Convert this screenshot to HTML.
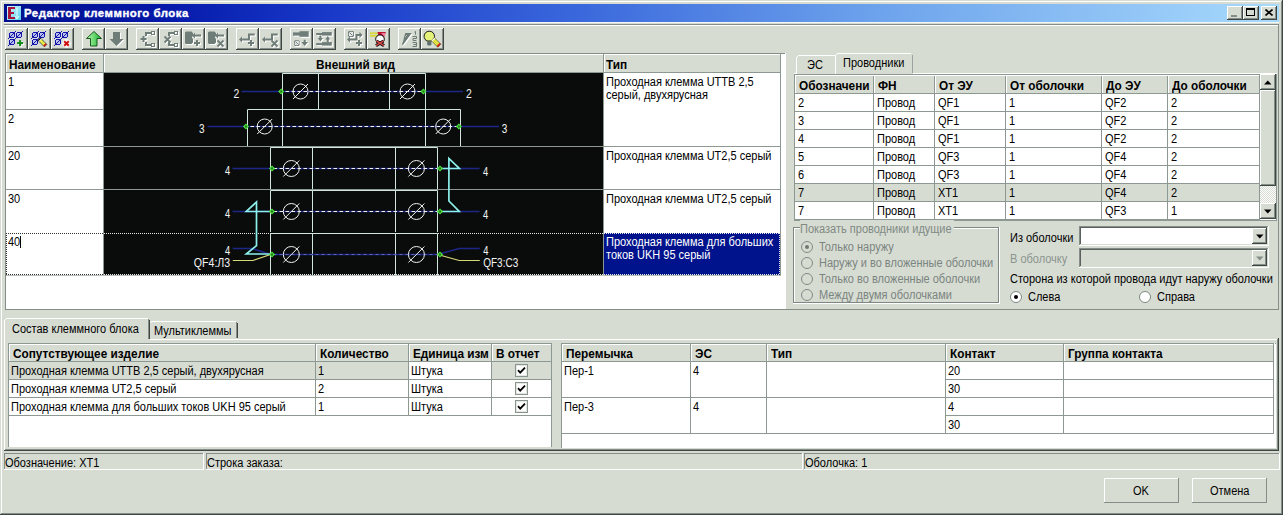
<!DOCTYPE html>
<html><head><meta charset="utf-8"><style>
html,body{margin:0;padding:0;}
body{width:1283px;height:515px;position:relative;overflow:hidden;background:#D7DCD3;font-family:"Liberation Sans",sans-serif;font-size:11px;color:#000;}
div,span,svg{position:absolute;}
span{white-space:pre;line-height:normal;}
</style></head><body>
<div style="left:0px;top:0px;width:1283px;height:1px;background:#D7DCD3"></div>
<div style="left:0px;top:0px;width:1px;height:515px;background:#D7DCD3"></div>
<div style="left:1px;top:1px;width:1281px;height:1px;background:#FFFFFF"></div>
<div style="left:1px;top:1px;width:1px;height:513px;background:#FFFFFF"></div>
<div style="left:0px;top:514px;width:1283px;height:1px;background:#3F4743"></div>
<div style="left:1282px;top:0px;width:1px;height:515px;background:#3F4743"></div>
<div style="left:1px;top:513px;width:1281px;height:1px;background:#858D88"></div>
<div style="left:1281px;top:1px;width:1px;height:513px;background:#858D88"></div>
<div style="left:4px;top:4px;width:1275px;height:18px;background:linear-gradient(to right,#00108C 0%,#0418A8 12%,#1838C8 25%,#3A68DC 45%,#6CA2EC 68%,#A8DAFC 100%)"></div>
<svg style="left:7px;top:6px" width="14" height="14" viewBox="0 0 14 14"><defs><linearGradient id="ig" x1="0" y1="0" x2="1" y2="1"><stop offset="0" stop-color="#D8F6FF"/><stop offset="1" stop-color="#58D0EC"/></linearGradient></defs><rect x="0" y="0" width="14" height="14" fill="url(#ig)"/><path d="M1 1H8V3H4V6H7V8H4V11H8V13H1Z" fill="#A8143A"/><path d="M10 2V12M8 10L10 13L12 10" stroke="#E0FFFF" stroke-width="1" fill="none"/></svg>
<span style="left:24px;top:6.6px;font-size:11.4px;font-weight:bold;color:#FFFFFF;letter-spacing:0.5px;-webkit-text-stroke:0.35px #FFFFFF">Редактор клеммного блока</span>
<div style="left:1227px;top:6px;width:16px;height:14px;background:#D7DCD3"></div>
<div style="left:1227px;top:6px;width:15px;height:1px;background:#FFFFFF"></div>
<div style="left:1227px;top:6px;width:1px;height:13px;background:#FFFFFF"></div>
<div style="left:1227px;top:19px;width:16px;height:1px;background:#3F4743"></div>
<div style="left:1242px;top:6px;width:1px;height:14px;background:#3F4743"></div>
<div style="left:1228px;top:18px;width:14px;height:1px;background:#858D88"></div>
<div style="left:1241px;top:7px;width:1px;height:12px;background:#858D88"></div>
<div style="left:1231px;top:15px;width:6px;height:2px;background:#858D88"></div>
<div style="left:1243px;top:6px;width:16px;height:14px;background:#D7DCD3"></div>
<div style="left:1243px;top:6px;width:15px;height:1px;background:#FFFFFF"></div>
<div style="left:1243px;top:6px;width:1px;height:13px;background:#FFFFFF"></div>
<div style="left:1243px;top:19px;width:16px;height:1px;background:#3F4743"></div>
<div style="left:1258px;top:6px;width:1px;height:14px;background:#3F4743"></div>
<div style="left:1244px;top:18px;width:14px;height:1px;background:#858D88"></div>
<div style="left:1257px;top:7px;width:1px;height:12px;background:#858D88"></div>
<div style="left:1246px;top:8px;width:9px;height:8px;border:1px solid #000;border-top-width:2px;box-sizing:border-box"></div>
<div style="left:1261px;top:6px;width:16px;height:14px;background:#D7DCD3"></div>
<div style="left:1261px;top:6px;width:15px;height:1px;background:#FFFFFF"></div>
<div style="left:1261px;top:6px;width:1px;height:13px;background:#FFFFFF"></div>
<div style="left:1261px;top:19px;width:16px;height:1px;background:#3F4743"></div>
<div style="left:1276px;top:6px;width:1px;height:14px;background:#3F4743"></div>
<div style="left:1262px;top:18px;width:14px;height:1px;background:#858D88"></div>
<div style="left:1275px;top:7px;width:1px;height:12px;background:#858D88"></div>
<svg style="left:1265px;top:9px" width="8" height="7" viewBox="0 0 8 7"><path d="M0.5 0.5L7.5 6.5M7.5 0.5L0.5 6.5" stroke="#000" stroke-width="1.6"/></svg>
<div style="left:4px;top:22px;width:1275px;height:1px;background:#F2F6F4"></div>
<div style="left:4px;top:24px;width:1275px;height:1px;background:#858D88"></div>
<div style="left:4px;top:25px;width:1275px;height:1px;background:#FFFFFF"></div>
<div style="left:1278px;top:24px;width:1px;height:286px;background:#858D88"></div>
<div style="left:5px;top:28px;width:23px;height:22px;background:#D7DCD3"></div>
<div style="left:5px;top:28px;width:22px;height:1px;background:#FFFFFF"></div>
<div style="left:5px;top:28px;width:1px;height:21px;background:#FFFFFF"></div>
<div style="left:5px;top:49px;width:23px;height:1px;background:#3F4743"></div>
<div style="left:27px;top:28px;width:1px;height:22px;background:#3F4743"></div>
<div style="left:6px;top:48px;width:21px;height:1px;background:#858D88"></div>
<div style="left:26px;top:29px;width:1px;height:20px;background:#858D88"></div>
<svg style="left:5px;top:28px" width="23" height="22" viewBox="0 0 23 22"><rect x="5" y="5" width="4" height="4" fill="#7888F4" fill-opacity="0.45"/><circle cx="7" cy="7" r="4" fill="#D0D8FF" fill-opacity="0.35"/><path d="M8 4h1v1h-1ZM9 8h1v1h-1ZM9 5h1v1h-1ZM4 6h1v1h-1ZM4 9h1v1h-1ZM5 4h1v1h-1ZM6 9h1v1h-1ZM7 4h1v1h-1ZM8 9h1v1h-1ZM9 4h1v1h-1ZM9 7h1v1h-1ZM4 5h1v1h-1ZM4 8h1v1h-1ZM5 9h1v1h-1ZM10 3h1v1h-1ZM3 10h1v1h-1ZM7 6h1v1h-1ZM8 5h1v1h-1ZM7 9h1v1h-1ZM9 6h1v1h-1ZM4 7h1v1h-1ZM6 4h1v1h-1ZM5 8h1v1h-1ZM6 7h1v1h-1Z" fill="#1414A8" shape-rendering="crispEdges"/><rect x="12" y="5" width="4" height="4" fill="#7888F4" fill-opacity="0.45"/><circle cx="14" cy="7" r="4" fill="#D0D8FF" fill-opacity="0.35"/><path d="M15 4h1v1h-1ZM16 8h1v1h-1ZM16 5h1v1h-1ZM11 6h1v1h-1ZM11 9h1v1h-1ZM12 4h1v1h-1ZM13 9h1v1h-1ZM14 4h1v1h-1ZM15 9h1v1h-1ZM16 4h1v1h-1ZM16 7h1v1h-1ZM11 5h1v1h-1ZM11 8h1v1h-1ZM12 9h1v1h-1ZM17 3h1v1h-1ZM10 10h1v1h-1ZM14 6h1v1h-1ZM15 5h1v1h-1ZM14 9h1v1h-1ZM16 6h1v1h-1ZM11 7h1v1h-1ZM13 4h1v1h-1ZM12 8h1v1h-1ZM13 7h1v1h-1Z" fill="#1414A8" shape-rendering="crispEdges"/><rect x="5" y="12" width="4" height="4" fill="#7888F4" fill-opacity="0.45"/><circle cx="7" cy="14" r="4" fill="#D0D8FF" fill-opacity="0.35"/><path d="M8 11h1v1h-1ZM9 15h1v1h-1ZM9 12h1v1h-1ZM4 13h1v1h-1ZM4 16h1v1h-1ZM5 11h1v1h-1ZM6 16h1v1h-1ZM7 11h1v1h-1ZM8 16h1v1h-1ZM9 11h1v1h-1ZM9 14h1v1h-1ZM4 12h1v1h-1ZM4 15h1v1h-1ZM5 16h1v1h-1ZM10 10h1v1h-1ZM3 17h1v1h-1ZM7 13h1v1h-1ZM8 12h1v1h-1ZM7 16h1v1h-1ZM9 13h1v1h-1ZM4 14h1v1h-1ZM6 11h1v1h-1ZM5 15h1v1h-1ZM6 14h1v1h-1Z" fill="#1414A8" shape-rendering="crispEdges"/><g fill="#FFFFFF" transform="translate(0.6,0.6)"><rect x="12.5" y="14.5" width="6" height="2" stroke="none"/><rect x="14.5" y="12.5" width="2" height="6" stroke="none"/></g><g fill="#108A18"><rect x="12.1" y="14.1" width="6" height="2" stroke="none"/><rect x="14.1" y="12.1" width="2" height="6" stroke="none"/></g></svg>
<div style="left:28px;top:28px;width:23px;height:22px;background:#D7DCD3"></div>
<div style="left:28px;top:28px;width:22px;height:1px;background:#FFFFFF"></div>
<div style="left:28px;top:28px;width:1px;height:21px;background:#FFFFFF"></div>
<div style="left:28px;top:49px;width:23px;height:1px;background:#3F4743"></div>
<div style="left:50px;top:28px;width:1px;height:22px;background:#3F4743"></div>
<div style="left:29px;top:48px;width:21px;height:1px;background:#858D88"></div>
<div style="left:49px;top:29px;width:1px;height:20px;background:#858D88"></div>
<svg style="left:28px;top:28px" width="23" height="22" viewBox="0 0 23 22"><rect x="5" y="5" width="4" height="4" fill="#7888F4" fill-opacity="0.45"/><circle cx="7" cy="7" r="4" fill="#D0D8FF" fill-opacity="0.35"/><path d="M8 4h1v1h-1ZM9 8h1v1h-1ZM9 5h1v1h-1ZM4 6h1v1h-1ZM4 9h1v1h-1ZM5 4h1v1h-1ZM6 9h1v1h-1ZM7 4h1v1h-1ZM8 9h1v1h-1ZM9 4h1v1h-1ZM9 7h1v1h-1ZM4 5h1v1h-1ZM4 8h1v1h-1ZM5 9h1v1h-1ZM10 3h1v1h-1ZM3 10h1v1h-1ZM7 6h1v1h-1ZM8 5h1v1h-1ZM7 9h1v1h-1ZM9 6h1v1h-1ZM4 7h1v1h-1ZM6 4h1v1h-1ZM5 8h1v1h-1ZM6 7h1v1h-1Z" fill="#1414A8" shape-rendering="crispEdges"/><rect x="12" y="5" width="4" height="4" fill="#7888F4" fill-opacity="0.45"/><circle cx="14" cy="7" r="4" fill="#D0D8FF" fill-opacity="0.35"/><path d="M15 4h1v1h-1ZM16 8h1v1h-1ZM16 5h1v1h-1ZM11 6h1v1h-1ZM11 9h1v1h-1ZM12 4h1v1h-1ZM13 9h1v1h-1ZM14 4h1v1h-1ZM15 9h1v1h-1ZM16 4h1v1h-1ZM16 7h1v1h-1ZM11 5h1v1h-1ZM11 8h1v1h-1ZM12 9h1v1h-1ZM17 3h1v1h-1ZM10 10h1v1h-1ZM14 6h1v1h-1ZM15 5h1v1h-1ZM14 9h1v1h-1ZM16 6h1v1h-1ZM11 7h1v1h-1ZM13 4h1v1h-1ZM12 8h1v1h-1ZM13 7h1v1h-1Z" fill="#1414A8" shape-rendering="crispEdges"/><rect x="5" y="12" width="4" height="4" fill="#7888F4" fill-opacity="0.45"/><circle cx="7" cy="14" r="4" fill="#D0D8FF" fill-opacity="0.35"/><path d="M8 11h1v1h-1ZM9 15h1v1h-1ZM9 12h1v1h-1ZM4 13h1v1h-1ZM4 16h1v1h-1ZM5 11h1v1h-1ZM6 16h1v1h-1ZM7 11h1v1h-1ZM8 16h1v1h-1ZM9 11h1v1h-1ZM9 14h1v1h-1ZM4 12h1v1h-1ZM4 15h1v1h-1ZM5 16h1v1h-1ZM10 10h1v1h-1ZM3 17h1v1h-1ZM7 13h1v1h-1ZM8 12h1v1h-1ZM7 16h1v1h-1ZM9 13h1v1h-1ZM4 14h1v1h-1ZM6 11h1v1h-1ZM5 15h1v1h-1ZM6 14h1v1h-1Z" fill="#1414A8" shape-rendering="crispEdges"/><path d="M12.6 10.2L10.2 12.6L16.4 18.8L18.8 16.4Z" fill="#E8EC48" stroke="#202010" stroke-width="0.7"/><path d="M15.2 17.6L17.6 15.2L18.8 16.4L16.4 18.8Z" fill="#C81818"/><path d="M12.6 10.2L10.2 12.6L11.2 13.6L13.6 11.2Z" fill="#FFFFFF"/><path d="M12.6 10.2L10.2 12.6" stroke="#000" stroke-width="1.1"/></svg>
<div style="left:51px;top:28px;width:23px;height:22px;background:#D7DCD3"></div>
<div style="left:51px;top:28px;width:22px;height:1px;background:#FFFFFF"></div>
<div style="left:51px;top:28px;width:1px;height:21px;background:#FFFFFF"></div>
<div style="left:51px;top:49px;width:23px;height:1px;background:#3F4743"></div>
<div style="left:73px;top:28px;width:1px;height:22px;background:#3F4743"></div>
<div style="left:52px;top:48px;width:21px;height:1px;background:#858D88"></div>
<div style="left:72px;top:29px;width:1px;height:20px;background:#858D88"></div>
<svg style="left:51px;top:28px" width="23" height="22" viewBox="0 0 23 22"><rect x="5" y="5" width="4" height="4" fill="#7888F4" fill-opacity="0.45"/><circle cx="7" cy="7" r="4" fill="#D0D8FF" fill-opacity="0.35"/><path d="M8 4h1v1h-1ZM9 8h1v1h-1ZM9 5h1v1h-1ZM4 6h1v1h-1ZM4 9h1v1h-1ZM5 4h1v1h-1ZM6 9h1v1h-1ZM7 4h1v1h-1ZM8 9h1v1h-1ZM9 4h1v1h-1ZM9 7h1v1h-1ZM4 5h1v1h-1ZM4 8h1v1h-1ZM5 9h1v1h-1ZM10 3h1v1h-1ZM3 10h1v1h-1ZM7 6h1v1h-1ZM8 5h1v1h-1ZM7 9h1v1h-1ZM9 6h1v1h-1ZM4 7h1v1h-1ZM6 4h1v1h-1ZM5 8h1v1h-1ZM6 7h1v1h-1Z" fill="#1414A8" shape-rendering="crispEdges"/><rect x="12" y="5" width="4" height="4" fill="#7888F4" fill-opacity="0.45"/><circle cx="14" cy="7" r="4" fill="#D0D8FF" fill-opacity="0.35"/><path d="M15 4h1v1h-1ZM16 8h1v1h-1ZM16 5h1v1h-1ZM11 6h1v1h-1ZM11 9h1v1h-1ZM12 4h1v1h-1ZM13 9h1v1h-1ZM14 4h1v1h-1ZM15 9h1v1h-1ZM16 4h1v1h-1ZM16 7h1v1h-1ZM11 5h1v1h-1ZM11 8h1v1h-1ZM12 9h1v1h-1ZM17 3h1v1h-1ZM10 10h1v1h-1ZM14 6h1v1h-1ZM15 5h1v1h-1ZM14 9h1v1h-1ZM16 6h1v1h-1ZM11 7h1v1h-1ZM13 4h1v1h-1ZM12 8h1v1h-1ZM13 7h1v1h-1Z" fill="#1414A8" shape-rendering="crispEdges"/><rect x="5" y="12" width="4" height="4" fill="#7888F4" fill-opacity="0.45"/><circle cx="7" cy="14" r="4" fill="#D0D8FF" fill-opacity="0.35"/><path d="M8 11h1v1h-1ZM9 15h1v1h-1ZM9 12h1v1h-1ZM4 13h1v1h-1ZM4 16h1v1h-1ZM5 11h1v1h-1ZM6 16h1v1h-1ZM7 11h1v1h-1ZM8 16h1v1h-1ZM9 11h1v1h-1ZM9 14h1v1h-1ZM4 12h1v1h-1ZM4 15h1v1h-1ZM5 16h1v1h-1ZM10 10h1v1h-1ZM3 17h1v1h-1ZM7 13h1v1h-1ZM8 12h1v1h-1ZM7 16h1v1h-1ZM9 13h1v1h-1ZM4 14h1v1h-1ZM6 11h1v1h-1ZM5 15h1v1h-1ZM6 14h1v1h-1Z" fill="#1414A8" shape-rendering="crispEdges"/><circle cx="15.5" cy="15.5" r="4.4" fill="#FFFFFF" opacity="0.75"/><path d="M13.2 13.2L17.8 17.8M17.8 13.2L13.2 17.8" stroke="#D01010" stroke-width="2"/></svg>
<div style="left:82px;top:28px;width:23px;height:22px;background:#D7DCD3"></div>
<div style="left:82px;top:28px;width:22px;height:1px;background:#FFFFFF"></div>
<div style="left:82px;top:28px;width:1px;height:21px;background:#FFFFFF"></div>
<div style="left:82px;top:49px;width:23px;height:1px;background:#3F4743"></div>
<div style="left:104px;top:28px;width:1px;height:22px;background:#3F4743"></div>
<div style="left:83px;top:48px;width:21px;height:1px;background:#858D88"></div>
<div style="left:103px;top:29px;width:1px;height:20px;background:#858D88"></div>
<svg style="left:82px;top:28px" width="23" height="22" viewBox="0 0 23 22"><defs><linearGradient id="ga" x1="0" y1="0" x2="1" y2="0"><stop offset="0" stop-color="#B8FFB0"/><stop offset="1" stop-color="#18B030"/></linearGradient></defs><path d="M4.5 10.5L12 3.5L19.5 10.5H15V18H8.5V10.5Z" fill="url(#ga)" stroke="#0A4A10" stroke-width="0.9" stroke-linejoin="miter"/></svg>
<div style="left:105px;top:28px;width:23px;height:22px;background:#D7DCD3"></div>
<div style="left:105px;top:28px;width:22px;height:1px;background:#FFFFFF"></div>
<div style="left:105px;top:28px;width:1px;height:21px;background:#FFFFFF"></div>
<div style="left:105px;top:49px;width:23px;height:1px;background:#3F4743"></div>
<div style="left:127px;top:28px;width:1px;height:22px;background:#3F4743"></div>
<div style="left:106px;top:48px;width:21px;height:1px;background:#858D88"></div>
<div style="left:126px;top:29px;width:1px;height:20px;background:#858D88"></div>
<svg style="left:105px;top:28px" width="23" height="22" viewBox="0 0 23 22"><g transform="translate(1,1)" fill="#FFFFFF" stroke="#FFFFFF"><path d="M8 4H15V11H18.5L11.5 18L4.5 11H8Z" stroke="none"/></g><g fill="#6F7D79" stroke="#6F7D79"><path d="M8 4H15V11H18.5L11.5 18L4.5 11H8Z" stroke="none"/></g></svg>
<div style="left:136px;top:28px;width:23px;height:22px;background:#D7DCD3"></div>
<div style="left:136px;top:28px;width:22px;height:1px;background:#FFFFFF"></div>
<div style="left:136px;top:28px;width:1px;height:21px;background:#FFFFFF"></div>
<div style="left:136px;top:49px;width:23px;height:1px;background:#3F4743"></div>
<div style="left:158px;top:28px;width:1px;height:22px;background:#3F4743"></div>
<div style="left:137px;top:48px;width:21px;height:1px;background:#858D88"></div>
<div style="left:157px;top:29px;width:1px;height:20px;background:#858D88"></div>
<svg style="left:136px;top:28px" width="23" height="22" viewBox="0 0 23 22"><g transform="translate(1,1)" fill="#FFFFFF" stroke="#FFFFFF"><rect x="4.5" y="10" width="6" height="2" stroke="none"/><rect x="6.5" y="8" width="2" height="6" stroke="none"/><rect x="9" y="4" width="2" height="4" stroke="none"/><rect x="9" y="14" width="2" height="4" stroke="none"/><rect x="9" y="4" width="6" height="2" stroke="none"/><rect x="9" y="16" width="6" height="2" stroke="none"/><rect x="15.5" y="3.5" width="3" height="3" fill="none" stroke-width="1"/><rect x="15.5" y="15.5" width="3" height="3" fill="none" stroke-width="1"/></g><g fill="#6F7D79" stroke="#6F7D79"><rect x="4.5" y="10" width="6" height="2" stroke="none"/><rect x="6.5" y="8" width="2" height="6" stroke="none"/><rect x="9" y="4" width="2" height="4" stroke="none"/><rect x="9" y="14" width="2" height="4" stroke="none"/><rect x="9" y="4" width="6" height="2" stroke="none"/><rect x="9" y="16" width="6" height="2" stroke="none"/><rect x="15.5" y="3.5" width="3" height="3" fill="none" stroke-width="1"/><rect x="15.5" y="15.5" width="3" height="3" fill="none" stroke-width="1"/></g></svg>
<div style="left:159px;top:28px;width:23px;height:22px;background:#D7DCD3"></div>
<div style="left:159px;top:28px;width:22px;height:1px;background:#FFFFFF"></div>
<div style="left:159px;top:28px;width:1px;height:21px;background:#FFFFFF"></div>
<div style="left:159px;top:49px;width:23px;height:1px;background:#3F4743"></div>
<div style="left:181px;top:28px;width:1px;height:22px;background:#3F4743"></div>
<div style="left:160px;top:48px;width:21px;height:1px;background:#858D88"></div>
<div style="left:180px;top:29px;width:1px;height:20px;background:#858D88"></div>
<svg style="left:159px;top:28px" width="23" height="22" viewBox="0 0 23 22"><g transform="translate(1,1)" fill="#FFFFFF" stroke="#FFFFFF"><path d="M5.5 8.5L11.5 14.5M11.5 8.5L5.5 14.5" stroke-width="1.8" fill="none"/><rect x="9" y="4" width="2" height="4" stroke="none"/><rect x="9" y="14" width="2" height="4" stroke="none"/><rect x="9" y="4" width="6" height="2" stroke="none"/><rect x="9" y="16" width="6" height="2" stroke="none"/><rect x="15.5" y="3.5" width="3" height="3" fill="none" stroke-width="1"/><rect x="15.5" y="15.5" width="3" height="3" fill="none" stroke-width="1"/></g><g fill="#6F7D79" stroke="#6F7D79"><path d="M5.5 8.5L11.5 14.5M11.5 8.5L5.5 14.5" stroke-width="1.8" fill="none"/><rect x="9" y="4" width="2" height="4" stroke="none"/><rect x="9" y="14" width="2" height="4" stroke="none"/><rect x="9" y="4" width="6" height="2" stroke="none"/><rect x="9" y="16" width="6" height="2" stroke="none"/><rect x="15.5" y="3.5" width="3" height="3" fill="none" stroke-width="1"/><rect x="15.5" y="15.5" width="3" height="3" fill="none" stroke-width="1"/></g></svg>
<div style="left:182px;top:28px;width:23px;height:22px;background:#D7DCD3"></div>
<div style="left:182px;top:28px;width:22px;height:1px;background:#FFFFFF"></div>
<div style="left:182px;top:28px;width:1px;height:21px;background:#FFFFFF"></div>
<div style="left:182px;top:49px;width:23px;height:1px;background:#3F4743"></div>
<div style="left:204px;top:28px;width:1px;height:22px;background:#3F4743"></div>
<div style="left:183px;top:48px;width:21px;height:1px;background:#858D88"></div>
<div style="left:203px;top:29px;width:1px;height:20px;background:#858D88"></div>
<svg style="left:182px;top:28px" width="23" height="22" viewBox="0 0 23 22"><g transform="translate(1,1)" fill="#FFFFFF" stroke="#FFFFFF"><path d="M4 3.5H9.5L11 5V7.5L10 9.5L11 11V14.5L9.5 16H4L3 15V4.5Z" stroke="none"/><path d="M10 7.4L13 4.5V6.5H19V8.5H13V10.5Z" stroke="none"/><rect x="12" y="14" width="6" height="2" stroke="none"/><rect x="14" y="12" width="2" height="6" stroke="none"/></g><g fill="#6F7D79" stroke="#6F7D79"><path d="M4 3.5H9.5L11 5V7.5L10 9.5L11 11V14.5L9.5 16H4L3 15V4.5Z" stroke="none"/><path d="M10 7.4L13 4.5V6.5H19V8.5H13V10.5Z" stroke="none"/><rect x="12" y="14" width="6" height="2" stroke="none"/><rect x="14" y="12" width="2" height="6" stroke="none"/></g></svg>
<div style="left:205px;top:28px;width:23px;height:22px;background:#D7DCD3"></div>
<div style="left:205px;top:28px;width:22px;height:1px;background:#FFFFFF"></div>
<div style="left:205px;top:28px;width:1px;height:21px;background:#FFFFFF"></div>
<div style="left:205px;top:49px;width:23px;height:1px;background:#3F4743"></div>
<div style="left:227px;top:28px;width:1px;height:22px;background:#3F4743"></div>
<div style="left:206px;top:48px;width:21px;height:1px;background:#858D88"></div>
<div style="left:226px;top:29px;width:1px;height:20px;background:#858D88"></div>
<svg style="left:205px;top:28px" width="23" height="22" viewBox="0 0 23 22"><g transform="translate(1,1)" fill="#FFFFFF" stroke="#FFFFFF"><path d="M4 3.5H9.5L11 5V7.5L10 9.5L11 11V14.5L9.5 16H4L3 15V4.5Z" stroke="none"/><path d="M10 7.4L13 4.5V6.5H19V8.5H13V10.5Z" stroke="none"/><path d="M12.5 12.5L18.5 18.5M18.5 12.5L12.5 18.5" stroke-width="1.8" fill="none"/></g><g fill="#6F7D79" stroke="#6F7D79"><path d="M4 3.5H9.5L11 5V7.5L10 9.5L11 11V14.5L9.5 16H4L3 15V4.5Z" stroke="none"/><path d="M10 7.4L13 4.5V6.5H19V8.5H13V10.5Z" stroke="none"/><path d="M12.5 12.5L18.5 18.5M18.5 12.5L12.5 18.5" stroke-width="1.8" fill="none"/></g></svg>
<div style="left:236px;top:28px;width:23px;height:22px;background:#D7DCD3"></div>
<div style="left:236px;top:28px;width:22px;height:1px;background:#FFFFFF"></div>
<div style="left:236px;top:28px;width:1px;height:21px;background:#FFFFFF"></div>
<div style="left:236px;top:49px;width:23px;height:1px;background:#3F4743"></div>
<div style="left:258px;top:28px;width:1px;height:22px;background:#3F4743"></div>
<div style="left:237px;top:48px;width:21px;height:1px;background:#858D88"></div>
<div style="left:257px;top:29px;width:1px;height:20px;background:#858D88"></div>
<svg style="left:236px;top:28px" width="23" height="22" viewBox="0 0 23 22"><g transform="translate(1,1)" fill="#FFFFFF" stroke="#FFFFFF"><path d="M3 11.6L6 8.6V10.6H12V5.5H18.7V7.5H14V12.6H6V14.6Z" stroke="none"/><rect x="12" y="14" width="6" height="2" stroke="none"/><rect x="14" y="12" width="2" height="6" stroke="none"/></g><g fill="#6F7D79" stroke="#6F7D79"><path d="M3 11.6L6 8.6V10.6H12V5.5H18.7V7.5H14V12.6H6V14.6Z" stroke="none"/><rect x="12" y="14" width="6" height="2" stroke="none"/><rect x="14" y="12" width="2" height="6" stroke="none"/></g></svg>
<div style="left:259px;top:28px;width:23px;height:22px;background:#D7DCD3"></div>
<div style="left:259px;top:28px;width:22px;height:1px;background:#FFFFFF"></div>
<div style="left:259px;top:28px;width:1px;height:21px;background:#FFFFFF"></div>
<div style="left:259px;top:49px;width:23px;height:1px;background:#3F4743"></div>
<div style="left:281px;top:28px;width:1px;height:22px;background:#3F4743"></div>
<div style="left:260px;top:48px;width:21px;height:1px;background:#858D88"></div>
<div style="left:280px;top:29px;width:1px;height:20px;background:#858D88"></div>
<svg style="left:259px;top:28px" width="23" height="22" viewBox="0 0 23 22"><g transform="translate(1,1)" fill="#FFFFFF" stroke="#FFFFFF"><path d="M3 11.6L6 8.6V10.6H12V5.5H18.7V7.5H14V12.6H6V14.6Z" stroke="none"/><path d="M12.5 12.5L18.5 18.5M18.5 12.5L12.5 18.5" stroke-width="1.8" fill="none"/></g><g fill="#6F7D79" stroke="#6F7D79"><path d="M3 11.6L6 8.6V10.6H12V5.5H18.7V7.5H14V12.6H6V14.6Z" stroke="none"/><path d="M12.5 12.5L18.5 18.5M18.5 12.5L12.5 18.5" stroke-width="1.8" fill="none"/></g></svg>
<div style="left:290px;top:28px;width:23px;height:22px;background:#D7DCD3"></div>
<div style="left:290px;top:28px;width:22px;height:1px;background:#FFFFFF"></div>
<div style="left:290px;top:28px;width:1px;height:21px;background:#FFFFFF"></div>
<div style="left:290px;top:49px;width:23px;height:1px;background:#3F4743"></div>
<div style="left:312px;top:28px;width:1px;height:22px;background:#3F4743"></div>
<div style="left:291px;top:48px;width:21px;height:1px;background:#858D88"></div>
<div style="left:311px;top:29px;width:1px;height:20px;background:#858D88"></div>
<svg style="left:290px;top:28px" width="23" height="22" viewBox="0 0 23 22"><g transform="translate(1,1)" fill="#FFFFFF" stroke="#FFFFFF"><rect x="3" y="4.4" width="7" height="3.2" stroke="none"/><rect x="9.5" y="3.2" width="9.2" height="5.6" stroke="none"/><path d="M5 12.3H8.6L9.6 13.3V16.9L8.6 17.9H5L4 16.9V13.3Z" stroke="none"/><path d="M13.7 11.8H15.7V13.9H18L14.7 17.9L11.3 13.9H13.7Z" stroke="none"/></g><g fill="#6F7D79" stroke="#6F7D79"><rect x="3" y="4.4" width="7" height="3.2" stroke="none"/><rect x="9.5" y="3.2" width="9.2" height="5.6" stroke="none"/><path d="M5 12.3H8.6L9.6 13.3V16.9L8.6 17.9H5L4 16.9V13.3Z" stroke="none"/><path d="M13.7 11.8H15.7V13.9H18L14.7 17.9L11.3 13.9H13.7Z" stroke="none"/></g><circle cx="6.8" cy="15.1" r="1.7" fill="none" stroke="#FFFFFF" stroke-width="0.9"/><path d="M4.8 17.1L8.8 13.1" stroke="#FFFFFF" stroke-width="0.9"/></svg>
<div style="left:313px;top:28px;width:23px;height:22px;background:#D7DCD3"></div>
<div style="left:313px;top:28px;width:22px;height:1px;background:#FFFFFF"></div>
<div style="left:313px;top:28px;width:1px;height:21px;background:#FFFFFF"></div>
<div style="left:313px;top:49px;width:23px;height:1px;background:#3F4743"></div>
<div style="left:335px;top:28px;width:1px;height:22px;background:#3F4743"></div>
<div style="left:314px;top:48px;width:21px;height:1px;background:#858D88"></div>
<div style="left:334px;top:29px;width:1px;height:20px;background:#858D88"></div>
<svg style="left:313px;top:28px" width="23" height="22" viewBox="0 0 23 22"><g transform="translate(1,1)" fill="#FFFFFF" stroke="#FFFFFF"><rect x="3.2" y="5" width="6" height="2" stroke="none"/><rect x="9" y="4.1" width="9.8" height="3.5" stroke="none"/><rect x="3.2" y="15.1" width="6" height="2" stroke="none"/><rect x="9" y="14.1" width="9.8" height="3.5" stroke="none"/><path d="M6.4 7.6H8.4V10H10L7.4 13.6L4.8 10H6.4Z" stroke="none"/><path d="M13.75 14H15.75V11.5H17.2L14.75 8.1L12.3 11.5H13.75Z" stroke="none"/></g><g fill="#6F7D79" stroke="#6F7D79"><rect x="3.2" y="5" width="6" height="2" stroke="none"/><rect x="9" y="4.1" width="9.8" height="3.5" stroke="none"/><rect x="3.2" y="15.1" width="6" height="2" stroke="none"/><rect x="9" y="14.1" width="9.8" height="3.5" stroke="none"/><path d="M6.4 7.6H8.4V10H10L7.4 13.6L4.8 10H6.4Z" stroke="none"/><path d="M13.75 14H15.75V11.5H17.2L14.75 8.1L12.3 11.5H13.75Z" stroke="none"/></g></svg>
<div style="left:344px;top:28px;width:23px;height:22px;background:#D7DCD3"></div>
<div style="left:344px;top:28px;width:22px;height:1px;background:#FFFFFF"></div>
<div style="left:344px;top:28px;width:1px;height:21px;background:#FFFFFF"></div>
<div style="left:344px;top:49px;width:23px;height:1px;background:#3F4743"></div>
<div style="left:366px;top:28px;width:1px;height:22px;background:#3F4743"></div>
<div style="left:345px;top:48px;width:21px;height:1px;background:#858D88"></div>
<div style="left:365px;top:29px;width:1px;height:20px;background:#858D88"></div>
<svg style="left:344px;top:28px" width="23" height="22" viewBox="0 0 23 22"><g transform="translate(1,1)" fill="#FFFFFF" stroke="#FFFFFF"><path d="M5 3H9L10 4V8L9 9H5L4 8V4Z" stroke="none"/><path d="M11.5 6H15.5V4L18.5 7L15.5 10V8H13.5V12.6H6V14.6L3 11.6L6 8.6V10.6H11.5Z" stroke="none"/><rect x="12" y="14" width="6" height="2" stroke="none"/><rect x="14" y="12" width="2" height="6" stroke="none"/></g><g fill="#6F7D79" stroke="#6F7D79"><path d="M5 3H9L10 4V8L9 9H5L4 8V4Z" stroke="none"/><path d="M11.5 6H15.5V4L18.5 7L15.5 10V8H13.5V12.6H6V14.6L3 11.6L6 8.6V10.6H11.5Z" stroke="none"/><rect x="12" y="14" width="6" height="2" stroke="none"/><rect x="14" y="12" width="2" height="6" stroke="none"/></g><circle cx="7" cy="6" r="1.8" fill="none" stroke="#FFFFFF" stroke-width="0.9"/><path d="M5 8L9 4" stroke="#FFFFFF" stroke-width="0.9"/></svg>
<div style="left:367px;top:28px;width:23px;height:22px;background:#D7DCD3"></div>
<div style="left:367px;top:28px;width:22px;height:1px;background:#FFFFFF"></div>
<div style="left:367px;top:28px;width:1px;height:21px;background:#FFFFFF"></div>
<div style="left:367px;top:49px;width:23px;height:1px;background:#3F4743"></div>
<div style="left:389px;top:28px;width:1px;height:22px;background:#3F4743"></div>
<div style="left:368px;top:48px;width:21px;height:1px;background:#858D88"></div>
<div style="left:388px;top:29px;width:1px;height:20px;background:#858D88"></div>
<svg style="left:367px;top:28px" width="23" height="22" viewBox="0 0 23 22"><rect x="3" y="4.4" width="7.6" height="1.8" fill="#D8D838"/><rect x="3" y="7" width="7.6" height="1.8" fill="#D8D838"/><path d="M10.4 4.1H18.8L17 9.7H12Z" fill="#C01030"/><path d="M14 5H18.6L17.4 8.4Z" fill="#F080A0"/><circle cx="13" cy="11.2" r="4.3" fill="#FFFFFF" stroke="#000" stroke-width="1"/><path d="M9 17.6L16.5 13M9.5 13L17 17.6" stroke="#000" stroke-width="3"/><path d="M9 17.6L16.5 13M9.5 13L17 17.6" stroke="#D04848" stroke-width="1.6"/></svg>
<div style="left:398px;top:28px;width:23px;height:22px;background:#D7DCD3"></div>
<div style="left:398px;top:28px;width:22px;height:1px;background:#FFFFFF"></div>
<div style="left:398px;top:28px;width:1px;height:21px;background:#FFFFFF"></div>
<div style="left:398px;top:49px;width:23px;height:1px;background:#3F4743"></div>
<div style="left:420px;top:28px;width:1px;height:22px;background:#3F4743"></div>
<div style="left:399px;top:48px;width:21px;height:1px;background:#858D88"></div>
<div style="left:419px;top:29px;width:1px;height:20px;background:#858D88"></div>
<svg style="left:398px;top:28px" width="23" height="22" viewBox="0 0 23 22"><g transform="translate(1,1)" fill="#FFFFFF" stroke="#FFFFFF"><path d="M4 16.5L7.3 5.1H13.8L5 17Z" stroke="none"/></g><path d="M4 16.5L5.5 12L5.8 10L7.3 5.1H13.8L5 17Z" fill="#6E7C78"/><path d="M7.5 8.5L8.5 7.5" stroke="#FFFFFF" stroke-width="0.9"/><g fill="none" stroke="#6E7C78" stroke-width="1"><path d="M17.5 3.2V6.7M16.5 4H17.5"/><path d="M14.5 8.5H18.5V10.5H15V12.5H18.5"/><path d="M14.5 14.5H18.5V18.5H14.5M15.5 16.5H18.5"/></g><g fill="none" stroke="#FFFFFF" stroke-width="1" opacity="0.9"><path d="M19 12.5H19.5M19 19H19.5"/></g></svg>
<div style="left:421px;top:28px;width:23px;height:22px;background:#D7DCD3"></div>
<div style="left:421px;top:28px;width:22px;height:1px;background:#FFFFFF"></div>
<div style="left:421px;top:28px;width:1px;height:21px;background:#FFFFFF"></div>
<div style="left:421px;top:49px;width:23px;height:1px;background:#3F4743"></div>
<div style="left:443px;top:28px;width:1px;height:22px;background:#3F4743"></div>
<div style="left:422px;top:48px;width:21px;height:1px;background:#858D88"></div>
<div style="left:442px;top:29px;width:1px;height:20px;background:#858D88"></div>
<svg style="left:421px;top:28px" width="23" height="22" viewBox="0 0 23 22"><path d="M8.3 3.2C11.3 3.2 13.5 5.4 13.5 8.3C13.5 10.3 12.2 11.5 11 13H5.6C4.4 11.5 3.1 10.3 3.1 8.3C3.1 5.4 5.3 3.2 8.3 3.2Z" fill="#E4F27A" stroke="#151515" stroke-width="1"/><path d="M6.2 13H10.4V16.6L9.6 17.6H7L6.2 16.6Z" fill="#5E6E6C"/><path d="M13.3 9.7L10.3 12.7L16.8 19.2L19.8 16.2Z" fill="#E8EC48" stroke="#202010" stroke-width="0.6"/><path d="M11.6 11.4L18.4 18.0" stroke="#C8C020" stroke-width="0.8"/><path d="M15.6 18L18.6 15L19.8 16.2L16.8 19.2Z" fill="#D01818"/><path d="M13.3 9.7L10.3 12.7L11.2 13.6L14.2 10.6Z" fill="#FFFFFF"/></svg>
<div style="left:5px;top:53px;width:781px;height:256px;background:#fff"></div>
<div style="left:5px;top:53px;width:780px;height:1px;background:#858D88"></div>
<div style="left:5px;top:53px;width:1px;height:256px;background:#858D88"></div>
<div style="left:5px;top:309px;width:1274px;height:1px;background:#858D88"></div>
<div style="left:6px;top:54px;width:774px;height:18px;background:#D7DCD3"></div>
<div style="left:6px;top:54px;width:774px;height:1px;background:#FFFFFF"></div>
<div style="left:6px;top:54px;width:1px;height:18px;background:#FFFFFF"></div>
<div style="left:6px;top:72px;width:775px;height:1px;background:#8E9893"></div>
<div style="left:103px;top:54px;width:1px;height:18px;background:#8E9893"></div>
<div style="left:104px;top:55px;width:1px;height:17px;background:#FFFFFF"></div>
<div style="left:603px;top:54px;width:1px;height:18px;background:#8E9893"></div>
<div style="left:604px;top:55px;width:1px;height:17px;background:#FFFFFF"></div>
<div style="left:780px;top:54px;width:1px;height:18px;background:#8E9893"></div>
<span style="left:9px;top:56.96px;font-size:12.8px;font-weight:bold;color:#000;transform:scaleX(0.9219);transform-origin:0 0;">Наименование</span>
<span style="left:316px;top:56.96px;font-size:12.8px;font-weight:bold;color:#000;transform:scaleX(0.9219);transform-origin:0 0;">Внешний вид</span>
<span style="left:606px;top:56.96px;font-size:12.8px;font-weight:bold;color:#000;transform:scaleX(0.9219);transform-origin:0 0;">Тип</span>
<div style="left:104px;top:73px;width:499px;height:202px;background:#0A0C0B"></div>
<div style="left:103px;top:72px;width:1px;height:203px;background:#8E9893"></div>
<div style="left:603px;top:72px;width:1px;height:203px;background:#8E9893"></div>
<div style="left:780px;top:72px;width:1px;height:203px;background:#8E9893"></div>
<div style="left:6px;top:109px;width:97px;height:1px;background:#8E9893"></div>
<div style="left:6px;top:146px;width:775px;height:1px;background:#8E9893"></div>
<div style="left:6px;top:189px;width:775px;height:1px;background:#8E9893"></div>
<span style="left:8px;top:75.3px;font-size:12.0px;font-weight:normal;color:#000;transform:scaleX(0.9167);transform-origin:0 0;">1</span>
<span style="left:8px;top:112.3px;font-size:12.0px;font-weight:normal;color:#000;transform:scaleX(0.9167);transform-origin:0 0;">2</span>
<span style="left:8px;top:149.3px;font-size:12.0px;font-weight:normal;color:#000;transform:scaleX(0.9167);transform-origin:0 0;">20</span>
<span style="left:8px;top:192.3px;font-size:12.0px;font-weight:normal;color:#000;transform:scaleX(0.9167);transform-origin:0 0;">30</span>
<span style="left:8px;top:235.3px;font-size:12.0px;font-weight:normal;color:#000;transform:scaleX(0.9167);transform-origin:0 0;">40</span>
<div style="left:20px;top:236px;width:1px;height:12px;background:#000"></div>
<span style="left:606px;top:75.3px;font-size:12.0px;font-weight:normal;color:#000;transform:scaleX(0.9167);transform-origin:0 0;">Проходная клемма UTTB 2,5</span>
<span style="left:606px;top:88.3px;font-size:12.0px;font-weight:normal;color:#000;transform:scaleX(0.9167);transform-origin:0 0;">серый, двухярусная</span>
<span style="left:606px;top:149.3px;font-size:12.0px;font-weight:normal;color:#000;transform:scaleX(0.9167);transform-origin:0 0;">Проходная клемма UT2,5 серый</span>
<span style="left:606px;top:192.3px;font-size:12.0px;font-weight:normal;color:#000;transform:scaleX(0.9167);transform-origin:0 0;">Проходная клемма UT2,5 серый</span>
<div style="left:604px;top:233px;width:176px;height:42px;background:#00128C"></div>
<span style="left:606px;top:235.3px;font-size:12.0px;font-weight:normal;color:#fff;transform:scaleX(0.9167);transform-origin:0 0;">Проходная клемма для больших</span>
<span style="left:606px;top:248.3px;font-size:12.0px;font-weight:normal;color:#fff;transform:scaleX(0.9167);transform-origin:0 0;">токов UKH 95 серый</span>
<div style="left:6px;top:275px;width:775px;height:1px;background:#B8BEB8"></div>
<div style="left:6px;top:233px;width:98px;height:1px;background:repeating-linear-gradient(to right,#303030 0 1px,transparent 1px 2px)"></div>
<div style="left:104px;top:233px;width:676px;height:1px;background:repeating-linear-gradient(to right,#E8E8E8 0 1px,transparent 1px 2px)"></div>
<div style="left:6px;top:274px;width:98px;height:1px;background:repeating-linear-gradient(to right,#303030 0 1px,transparent 1px 2px)"></div>
<div style="left:104px;top:274px;width:676px;height:1px;background:repeating-linear-gradient(to right,#E8E8E8 0 1px,transparent 1px 2px)"></div>
<div style="left:6px;top:233px;width:1px;height:42px;background:repeating-linear-gradient(to bottom,#303030 0 1px,transparent 1px 2px)"></div>
<div style="left:779px;top:233px;width:1px;height:42px;background:repeating-linear-gradient(to bottom,#E8E8E8 0 1px,transparent 1px 2px)"></div>
<svg style="left:104px;top:73px" width="499" height="202" viewBox="104 73 499 202"><line x1="282.5" y1="73.5" x2="425.5" y2="73.5" stroke="#D2E6E0" stroke-width="1" /><line x1="282.5" y1="73.5" x2="282.5" y2="146" stroke="#D2E6E0" stroke-width="1" /><line x1="425.5" y1="73.5" x2="425.5" y2="146" stroke="#D2E6E0" stroke-width="1" /><line x1="318.5" y1="73.5" x2="318.5" y2="109.5" stroke="#D2E6E0" stroke-width="1" /><line x1="389.5" y1="73.5" x2="389.5" y2="109.5" stroke="#D2E6E0" stroke-width="1" /><line x1="247.5" y1="109.5" x2="460.5" y2="109.5" stroke="#D2E6E0" stroke-width="1" /><line x1="247.5" y1="109.5" x2="247.5" y2="146" stroke="#D2E6E0" stroke-width="1" /><line x1="460.5" y1="109.5" x2="460.5" y2="146" stroke="#D2E6E0" stroke-width="1" /><line x1="241.5" y1="91.5" x2="282.5" y2="91.5" stroke="#1C2686" stroke-width="1.6" /><line x1="425.5" y1="91.5" x2="463" y2="91.5" stroke="#1C2686" stroke-width="1.6" /><line x1="282.5" y1="91.5" x2="425.5" y2="91.5" stroke="#1C2686" stroke-width="1.6" /><line x1="285.5" y1="91.5" x2="425.5" y2="91.5" stroke="#F2F2F2" stroke-width="1.2" stroke-dasharray="3.6 2.4"/><circle cx="300.5" cy="91.5" r="7.5" stroke="#EEF2F0" stroke-width="1" fill="none"/><line x1="293.0" y1="99.0" x2="308.0" y2="84.0" stroke="#EEF2F0" stroke-width="1" /><circle cx="407.5" cy="91.5" r="7.5" stroke="#EEF2F0" stroke-width="1" fill="none"/><line x1="400.0" y1="99.0" x2="415.0" y2="84.0" stroke="#EEF2F0" stroke-width="1" /><text x="233.5" y="97.6" font-family="Liberation Sans" font-size="12" fill="#F4F4F4" textLength="5.8" lengthAdjust="spacingAndGlyphs">2</text><text x="466" y="97.89999999999999" font-family="Liberation Sans" font-size="12" fill="#F4F4F4" textLength="5.8" lengthAdjust="spacingAndGlyphs">2</text><line x1="207.5" y1="126.5" x2="247.5" y2="126.5" stroke="#1C2686" stroke-width="1.6" /><line x1="460.5" y1="126.5" x2="499" y2="126.5" stroke="#1C2686" stroke-width="1.6" /><line x1="247.5" y1="126.5" x2="460.5" y2="126.5" stroke="#1C2686" stroke-width="1.6" /><line x1="250.5" y1="126.5" x2="460.5" y2="126.5" stroke="#F2F2F2" stroke-width="1.2" stroke-dasharray="3.6 2.4"/><circle cx="264.7" cy="126.5" r="7.5" stroke="#EEF2F0" stroke-width="1" fill="none"/><line x1="257.2" y1="134.0" x2="272.2" y2="119.0" stroke="#EEF2F0" stroke-width="1" /><circle cx="443.2" cy="126.5" r="7.5" stroke="#EEF2F0" stroke-width="1" fill="none"/><line x1="435.7" y1="134.0" x2="450.7" y2="119.0" stroke="#EEF2F0" stroke-width="1" /><text x="199" y="132.8" font-family="Liberation Sans" font-size="12" fill="#F4F4F4" textLength="5.6" lengthAdjust="spacingAndGlyphs">3</text><text x="501.7" y="132.8" font-family="Liberation Sans" font-size="12" fill="#F4F4F4" textLength="5.6" lengthAdjust="spacingAndGlyphs">3</text><line x1="270.5" y1="147.5" x2="437.5" y2="147.5" stroke="#D2E6E0" stroke-width="1" /><line x1="270.5" y1="147.5" x2="270.5" y2="189" stroke="#D2E6E0" stroke-width="1" /><line x1="312.5" y1="147.5" x2="312.5" y2="189" stroke="#D2E6E0" stroke-width="1" /><line x1="395.5" y1="147.5" x2="395.5" y2="189" stroke="#D2E6E0" stroke-width="1" /><line x1="437.5" y1="147.5" x2="437.5" y2="189" stroke="#D2E6E0" stroke-width="1" /><line x1="270.5" y1="190.5" x2="437.5" y2="190.5" stroke="#D2E6E0" stroke-width="1" /><line x1="270.5" y1="190.5" x2="270.5" y2="232" stroke="#D2E6E0" stroke-width="1" /><line x1="312.5" y1="190.5" x2="312.5" y2="232" stroke="#D2E6E0" stroke-width="1" /><line x1="395.5" y1="190.5" x2="395.5" y2="232" stroke="#D2E6E0" stroke-width="1" /><line x1="437.5" y1="190.5" x2="437.5" y2="232" stroke="#D2E6E0" stroke-width="1" /><line x1="270.5" y1="233.5" x2="437.5" y2="233.5" stroke="#D2E6E0" stroke-width="1" /><line x1="270.5" y1="233.5" x2="270.5" y2="275" stroke="#D2E6E0" stroke-width="1" /><line x1="312.5" y1="233.5" x2="312.5" y2="275" stroke="#D2E6E0" stroke-width="1" /><line x1="395.5" y1="233.5" x2="395.5" y2="275" stroke="#D2E6E0" stroke-width="1" /><line x1="437.5" y1="233.5" x2="437.5" y2="275" stroke="#D2E6E0" stroke-width="1" /><line x1="232.6" y1="168.5" x2="270.5" y2="168.5" stroke="#1C2686" stroke-width="1.6" /><line x1="437.5" y1="168.5" x2="479.5" y2="168.5" stroke="#1C2686" stroke-width="1.6" /><line x1="270.5" y1="168.5" x2="437.5" y2="168.5" stroke="#1C2686" stroke-width="1.6" /><line x1="273.5" y1="168.5" x2="437.5" y2="168.5" stroke="#F2F2F2" stroke-width="1.2" stroke-dasharray="3.6 2.4"/><circle cx="291.3" cy="168.5" r="8" stroke="#EEF2F0" stroke-width="1" fill="none"/><line x1="283.3" y1="176.5" x2="299.3" y2="160.5" stroke="#EEF2F0" stroke-width="1" /><circle cx="416.4" cy="168.5" r="8" stroke="#EEF2F0" stroke-width="1" fill="none"/><line x1="408.4" y1="176.5" x2="424.4" y2="160.5" stroke="#EEF2F0" stroke-width="1" /><text x="225" y="174.79999999999998" font-family="Liberation Sans" font-size="12" fill="#F4F4F4" textLength="5.2" lengthAdjust="spacingAndGlyphs">4</text><text x="483" y="175.5" font-family="Liberation Sans" font-size="12" fill="#F4F4F4" textLength="5.2" lengthAdjust="spacingAndGlyphs">4</text><line x1="232.6" y1="211.5" x2="270.5" y2="211.5" stroke="#1C2686" stroke-width="1.6" /><line x1="437.5" y1="211.5" x2="479.5" y2="211.5" stroke="#1C2686" stroke-width="1.6" /><line x1="270.5" y1="211.5" x2="437.5" y2="211.5" stroke="#1C2686" stroke-width="1.6" /><line x1="273.5" y1="211.5" x2="437.5" y2="211.5" stroke="#F2F2F2" stroke-width="1.2" stroke-dasharray="3.6 2.4"/><circle cx="291.3" cy="211.5" r="8" stroke="#EEF2F0" stroke-width="1" fill="none"/><line x1="283.3" y1="219.5" x2="299.3" y2="203.5" stroke="#EEF2F0" stroke-width="1" /><circle cx="416.4" cy="211.5" r="8" stroke="#EEF2F0" stroke-width="1" fill="none"/><line x1="408.4" y1="219.5" x2="424.4" y2="203.5" stroke="#EEF2F0" stroke-width="1" /><text x="225" y="217.79999999999998" font-family="Liberation Sans" font-size="12" fill="#F4F4F4" textLength="5.2" lengthAdjust="spacingAndGlyphs">4</text><text x="483" y="218.5" font-family="Liberation Sans" font-size="12" fill="#F4F4F4" textLength="5.2" lengthAdjust="spacingAndGlyphs">4</text><line x1="270.5" y1="254.5" x2="437.5" y2="254.5" stroke="#1C2686" stroke-width="1.6" /><line x1="273.5" y1="254.5" x2="437.5" y2="254.5" stroke="#5A68B8" stroke-width="1.1" stroke-dasharray="3 3"/><circle cx="291.3" cy="254.5" r="8" stroke="#EEF2F0" stroke-width="1" fill="none"/><line x1="283.3" y1="262.5" x2="299.3" y2="246.5" stroke="#EEF2F0" stroke-width="1" /><circle cx="416.4" cy="254.5" r="8" stroke="#EEF2F0" stroke-width="1" fill="none"/><line x1="408.4" y1="262.5" x2="424.4" y2="246.5" stroke="#EEF2F0" stroke-width="1" /><path d="M232.8 248.5 L252 248.5 L270.5 254.5" stroke="#1C2686" stroke-width="1.6" fill="none" /><path d="M232.8 260.5 L253 260.5 L270.5 254.5" stroke="#D8D878" stroke-width="1.2" fill="none" /><path d="M437.5 254.5 L459.2 248.5 L479.8 248.5" stroke="#1C2686" stroke-width="1.6" fill="none" /><path d="M437.5 254.5 L459.2 260.5 L479.8 260.5" stroke="#D8D878" stroke-width="1.2" fill="none" /><text x="225" y="255.29999999999998" font-family="Liberation Sans" font-size="12" fill="#F4F4F4" textLength="5.2" lengthAdjust="spacingAndGlyphs">4</text><text x="483.2" y="255.2" font-family="Liberation Sans" font-size="12" fill="#F4F4F4" textLength="5.2" lengthAdjust="spacingAndGlyphs">4</text><text x="193.8" y="267.3" font-family="Liberation Sans" font-size="12" fill="#F4F4F4" textLength="36.4" lengthAdjust="spacingAndGlyphs">QF4:Л3</text><text x="483.2" y="267.3" font-family="Liberation Sans" font-size="12" fill="#F4F4F4" textLength="35" lengthAdjust="spacingAndGlyphs">QF3:C3</text><path d="M437.5 168.5 L459.3 168.5 L448.9 158.5 L448.9 201 L459.3 211.5 L437.5 211.5" stroke="#8CF0EC" stroke-width="1.7" fill="none" stroke-linejoin="miter"/><path d="M270.5 211.5 L246.3 211.5 L256.5 202 L256.5 245.6 L246.3 254 L270.5 254" stroke="#8CF0EC" stroke-width="1.7" fill="none" stroke-linejoin="miter"/><path d="M278.2 91.5L281.2 88.5L284.2 91.5L281.2 94.5Z" fill="#48E838"/><rect x="280.2" y="90.5" width="2" height="2" fill="#2A6A20"/><path d="M420.4 91.5L423.4 88.5L426.4 91.5L423.4 94.5Z" fill="#48E838"/><rect x="422.4" y="90.5" width="2" height="2" fill="#2A6A20"/><path d="M243 126.5L246 123.5L249 126.5L246 129.5Z" fill="#48E838"/><rect x="245" y="125.5" width="2" height="2" fill="#2A6A20"/><path d="M455.9 126.5L458.9 123.5L461.9 126.5L458.9 129.5Z" fill="#48E838"/><rect x="457.9" y="125.5" width="2" height="2" fill="#2A6A20"/><path d="M269 168.5L272 165.5L275 168.5L272 171.5Z" fill="#48E838"/><rect x="271" y="167.5" width="2" height="2" fill="#2A6A20"/><path d="M437 168.5L440 165.5L443 168.5L440 171.5Z" fill="#48E838"/><rect x="439" y="167.5" width="2" height="2" fill="#2A6A20"/><path d="M269 211.5L272 208.5L275 211.5L272 214.5Z" fill="#48E838"/><rect x="271" y="210.5" width="2" height="2" fill="#2A6A20"/><path d="M437 211.5L440 208.5L443 211.5L440 214.5Z" fill="#48E838"/><rect x="439" y="210.5" width="2" height="2" fill="#2A6A20"/><path d="M269 254.5L272 251.5L275 254.5L272 257.5Z" fill="#48E838"/><rect x="271" y="253.5" width="2" height="2" fill="#2A6A20"/><path d="M437 254.5L440 251.5L443 254.5L440 257.5Z" fill="#48E838"/><rect x="439" y="253.5" width="2" height="2" fill="#2A6A20"/></svg>
<div style="left:1278px;top:73px;width:1px;height:237px;background:#858D88"></div>
<div style="left:794px;top:73px;width:483px;height:1px;background:#FFFFFF"></div>
<div style="left:796px;top:55px;width:41px;height:19px;background:#D7DCD3"></div>
<div style="left:798px;top:55px;width:37px;height:1px;background:#FFFFFF"></div>
<div style="left:796px;top:57px;width:1px;height:17px;background:#FFFFFF"></div>
<div style="left:797px;top:56px;width:1px;height:1px;background:#FFFFFF"></div>
<div style="left:836px;top:57px;width:1px;height:16px;background:#9AA29E"></div>
<span style="left:807px;top:57.9px;font-size:12.0px;font-weight:normal;color:#000;transform:scaleX(0.9167);transform-origin:0 0;">ЭС</span>
<div style="left:835px;top:53px;width:78px;height:21px;background:#D7DCD3"></div>
<div style="left:837px;top:53px;width:74px;height:1px;background:#FFFFFF"></div>
<div style="left:835px;top:55px;width:1px;height:20px;background:#FFFFFF"></div>
<div style="left:836px;top:54px;width:1px;height:1px;background:#FFFFFF"></div>
<div style="left:912px;top:55px;width:1px;height:18px;background:#9AA29E"></div>
<span style="left:843.4px;top:56.2px;font-size:12.0px;font-weight:normal;color:#000;transform:scaleX(0.9167);transform-origin:0 0;">Проводники</span>
<div style="left:794px;top:74px;width:483px;height:146px;background:#fff"></div>
<div style="left:794px;top:74px;width:483px;height:1px;background:#8E9893"></div>
<div style="left:794px;top:74px;width:1px;height:146px;background:#8E9893"></div>
<div style="left:794px;top:220px;width:483px;height:1px;background:#8E9893"></div>
<div style="left:1276px;top:74px;width:1px;height:146px;background:#8E9893"></div>
<div style="left:795px;top:75px;width:465px;height:18px;background:#D7DCD3"></div>
<div style="left:795px;top:93px;width:465px;height:1px;background:#8E9893"></div>
<div style="left:873px;top:75px;width:1px;height:18px;background:#8E9893"></div>
<div style="left:874px;top:76px;width:1px;height:17px;background:#FFFFFF"></div>
<div style="left:873px;top:93px;width:1px;height:127px;background:#8E9893"></div>
<div style="left:934px;top:75px;width:1px;height:18px;background:#8E9893"></div>
<div style="left:935px;top:76px;width:1px;height:17px;background:#FFFFFF"></div>
<div style="left:934px;top:93px;width:1px;height:127px;background:#8E9893"></div>
<div style="left:1005px;top:75px;width:1px;height:18px;background:#8E9893"></div>
<div style="left:1006px;top:76px;width:1px;height:17px;background:#FFFFFF"></div>
<div style="left:1005px;top:93px;width:1px;height:127px;background:#8E9893"></div>
<div style="left:1101px;top:75px;width:1px;height:18px;background:#8E9893"></div>
<div style="left:1102px;top:76px;width:1px;height:17px;background:#FFFFFF"></div>
<div style="left:1101px;top:93px;width:1px;height:127px;background:#8E9893"></div>
<div style="left:1167px;top:75px;width:1px;height:18px;background:#8E9893"></div>
<div style="left:1168px;top:76px;width:1px;height:17px;background:#FFFFFF"></div>
<div style="left:1167px;top:93px;width:1px;height:127px;background:#8E9893"></div>
<div style="left:1259px;top:75px;width:1px;height:18px;background:#8E9893"></div>
<div style="left:1260px;top:76px;width:1px;height:17px;background:#FFFFFF"></div>
<div style="left:1259px;top:93px;width:1px;height:127px;background:#8E9893"></div>
<div style="left:795px;top:76px;width:1px;height:17px;background:#FFFFFF"></div>
<div style="left:795px;top:75px;width:464px;height:1px;background:#FFFFFF"></div>
<span style="left:799px;top:78.36px;font-size:12.8px;font-weight:bold;color:#000;transform:scaleX(0.9219);transform-origin:0 0;">Обозначени</span>
<span style="left:878px;top:78.36px;font-size:12.8px;font-weight:bold;color:#000;transform:scaleX(0.9219);transform-origin:0 0;">ФН</span>
<span style="left:939px;top:78.36px;font-size:12.8px;font-weight:bold;color:#000;transform:scaleX(0.9219);transform-origin:0 0;">От ЭУ</span>
<span style="left:1010px;top:78.36px;font-size:12.8px;font-weight:bold;color:#000;transform:scaleX(0.9219);transform-origin:0 0;">От оболочки</span>
<span style="left:1106px;top:78.36px;font-size:12.8px;font-weight:bold;color:#000;transform:scaleX(0.9219);transform-origin:0 0;">До ЭУ</span>
<span style="left:1172px;top:78.36px;font-size:12.8px;font-weight:bold;color:#000;transform:scaleX(0.9219);transform-origin:0 0;">До оболочки</span>
<div style="left:795px;top:111px;width:464px;height:1px;background:#8E9893"></div>
<span style="left:798px;top:96.3px;font-size:12.0px;font-weight:normal;color:#000;transform:scaleX(0.9167);transform-origin:0 0;">2</span>
<span style="left:877px;top:96.3px;font-size:12.0px;font-weight:normal;color:#000;transform:scaleX(0.9167);transform-origin:0 0;">Провод</span>
<span style="left:938px;top:96.3px;font-size:12.0px;font-weight:normal;color:#000;transform:scaleX(0.9167);transform-origin:0 0;">QF1</span>
<span style="left:1009px;top:96.3px;font-size:12.0px;font-weight:normal;color:#000;transform:scaleX(0.9167);transform-origin:0 0;">1</span>
<span style="left:1105px;top:96.3px;font-size:12.0px;font-weight:normal;color:#000;transform:scaleX(0.9167);transform-origin:0 0;">QF2</span>
<span style="left:1171px;top:96.3px;font-size:12.0px;font-weight:normal;color:#000;transform:scaleX(0.9167);transform-origin:0 0;">2</span>
<div style="left:795px;top:129px;width:464px;height:1px;background:#8E9893"></div>
<span style="left:798px;top:114.3px;font-size:12.0px;font-weight:normal;color:#000;transform:scaleX(0.9167);transform-origin:0 0;">3</span>
<span style="left:877px;top:114.3px;font-size:12.0px;font-weight:normal;color:#000;transform:scaleX(0.9167);transform-origin:0 0;">Провод</span>
<span style="left:938px;top:114.3px;font-size:12.0px;font-weight:normal;color:#000;transform:scaleX(0.9167);transform-origin:0 0;">QF1</span>
<span style="left:1009px;top:114.3px;font-size:12.0px;font-weight:normal;color:#000;transform:scaleX(0.9167);transform-origin:0 0;">1</span>
<span style="left:1105px;top:114.3px;font-size:12.0px;font-weight:normal;color:#000;transform:scaleX(0.9167);transform-origin:0 0;">QF2</span>
<span style="left:1171px;top:114.3px;font-size:12.0px;font-weight:normal;color:#000;transform:scaleX(0.9167);transform-origin:0 0;">2</span>
<div style="left:795px;top:147px;width:464px;height:1px;background:#8E9893"></div>
<span style="left:798px;top:132.3px;font-size:12.0px;font-weight:normal;color:#000;transform:scaleX(0.9167);transform-origin:0 0;">4</span>
<span style="left:877px;top:132.3px;font-size:12.0px;font-weight:normal;color:#000;transform:scaleX(0.9167);transform-origin:0 0;">Провод</span>
<span style="left:938px;top:132.3px;font-size:12.0px;font-weight:normal;color:#000;transform:scaleX(0.9167);transform-origin:0 0;">QF1</span>
<span style="left:1009px;top:132.3px;font-size:12.0px;font-weight:normal;color:#000;transform:scaleX(0.9167);transform-origin:0 0;">1</span>
<span style="left:1105px;top:132.3px;font-size:12.0px;font-weight:normal;color:#000;transform:scaleX(0.9167);transform-origin:0 0;">QF2</span>
<span style="left:1171px;top:132.3px;font-size:12.0px;font-weight:normal;color:#000;transform:scaleX(0.9167);transform-origin:0 0;">2</span>
<div style="left:795px;top:165px;width:464px;height:1px;background:#8E9893"></div>
<span style="left:798px;top:150.3px;font-size:12.0px;font-weight:normal;color:#000;transform:scaleX(0.9167);transform-origin:0 0;">5</span>
<span style="left:877px;top:150.3px;font-size:12.0px;font-weight:normal;color:#000;transform:scaleX(0.9167);transform-origin:0 0;">Провод</span>
<span style="left:938px;top:150.3px;font-size:12.0px;font-weight:normal;color:#000;transform:scaleX(0.9167);transform-origin:0 0;">QF3</span>
<span style="left:1009px;top:150.3px;font-size:12.0px;font-weight:normal;color:#000;transform:scaleX(0.9167);transform-origin:0 0;">1</span>
<span style="left:1105px;top:150.3px;font-size:12.0px;font-weight:normal;color:#000;transform:scaleX(0.9167);transform-origin:0 0;">QF4</span>
<span style="left:1171px;top:150.3px;font-size:12.0px;font-weight:normal;color:#000;transform:scaleX(0.9167);transform-origin:0 0;">2</span>
<div style="left:795px;top:183px;width:464px;height:1px;background:#8E9893"></div>
<span style="left:798px;top:168.3px;font-size:12.0px;font-weight:normal;color:#000;transform:scaleX(0.9167);transform-origin:0 0;">6</span>
<span style="left:877px;top:168.3px;font-size:12.0px;font-weight:normal;color:#000;transform:scaleX(0.9167);transform-origin:0 0;">Провод</span>
<span style="left:938px;top:168.3px;font-size:12.0px;font-weight:normal;color:#000;transform:scaleX(0.9167);transform-origin:0 0;">QF3</span>
<span style="left:1009px;top:168.3px;font-size:12.0px;font-weight:normal;color:#000;transform:scaleX(0.9167);transform-origin:0 0;">1</span>
<span style="left:1105px;top:168.3px;font-size:12.0px;font-weight:normal;color:#000;transform:scaleX(0.9167);transform-origin:0 0;">QF4</span>
<span style="left:1171px;top:168.3px;font-size:12.0px;font-weight:normal;color:#000;transform:scaleX(0.9167);transform-origin:0 0;">2</span>
<div style="left:795px;top:184px;width:464px;height:17px;background:#D7DCD3"></div>
<div style="left:873px;top:183px;width:1px;height:18px;background:#8E9893"></div>
<div style="left:934px;top:183px;width:1px;height:18px;background:#8E9893"></div>
<div style="left:1005px;top:183px;width:1px;height:18px;background:#8E9893"></div>
<div style="left:1101px;top:183px;width:1px;height:18px;background:#8E9893"></div>
<div style="left:1167px;top:183px;width:1px;height:18px;background:#8E9893"></div>
<div style="left:1259px;top:183px;width:1px;height:18px;background:#8E9893"></div>
<div style="left:795px;top:201px;width:464px;height:1px;background:#8E9893"></div>
<span style="left:798px;top:186.3px;font-size:12.0px;font-weight:normal;color:#000;transform:scaleX(0.9167);transform-origin:0 0;">7</span>
<span style="left:877px;top:186.3px;font-size:12.0px;font-weight:normal;color:#000;transform:scaleX(0.9167);transform-origin:0 0;">Провод</span>
<span style="left:938px;top:186.3px;font-size:12.0px;font-weight:normal;color:#000;transform:scaleX(0.9167);transform-origin:0 0;">XT1</span>
<span style="left:1009px;top:186.3px;font-size:12.0px;font-weight:normal;color:#000;transform:scaleX(0.9167);transform-origin:0 0;">1</span>
<span style="left:1105px;top:186.3px;font-size:12.0px;font-weight:normal;color:#000;transform:scaleX(0.9167);transform-origin:0 0;">QF4</span>
<span style="left:1171px;top:186.3px;font-size:12.0px;font-weight:normal;color:#000;transform:scaleX(0.9167);transform-origin:0 0;">2</span>
<div style="left:795px;top:219px;width:464px;height:1px;background:#8E9893"></div>
<span style="left:798px;top:204.3px;font-size:12.0px;font-weight:normal;color:#000;transform:scaleX(0.9167);transform-origin:0 0;">7</span>
<span style="left:877px;top:204.3px;font-size:12.0px;font-weight:normal;color:#000;transform:scaleX(0.9167);transform-origin:0 0;">Провод</span>
<span style="left:938px;top:204.3px;font-size:12.0px;font-weight:normal;color:#000;transform:scaleX(0.9167);transform-origin:0 0;">XT1</span>
<span style="left:1009px;top:204.3px;font-size:12.0px;font-weight:normal;color:#000;transform:scaleX(0.9167);transform-origin:0 0;">1</span>
<span style="left:1105px;top:204.3px;font-size:12.0px;font-weight:normal;color:#000;transform:scaleX(0.9167);transform-origin:0 0;">QF3</span>
<span style="left:1171px;top:204.3px;font-size:12.0px;font-weight:normal;color:#000;transform:scaleX(0.9167);transform-origin:0 0;">1</span>
<div style="left:1260px;top:90px;width:16px;height:113px;background:repeating-conic-gradient(#FFFFFF 0% 25%, #D7DCD3 0% 50%) 0 0/2px 2px"></div>
<div style="left:1260px;top:74px;width:16px;height:16px;background:#D7DCD3"></div>
<div style="left:1260px;top:74px;width:15px;height:1px;background:#FFFFFF"></div>
<div style="left:1260px;top:74px;width:1px;height:15px;background:#FFFFFF"></div>
<div style="left:1260px;top:89px;width:16px;height:1px;background:#3F4743"></div>
<div style="left:1275px;top:74px;width:1px;height:16px;background:#3F4743"></div>
<div style="left:1261px;top:88px;width:14px;height:1px;background:#858D88"></div>
<div style="left:1274px;top:75px;width:1px;height:14px;background:#858D88"></div>
<svg style="left:1264px;top:80px" width="8" height="5"><path d="M0 4.5H7.5L3.75 0.5Z" fill="#000"/></svg>
<div style="left:1260px;top:90px;width:16px;height:96px;background:#D7DCD3"></div>
<div style="left:1260px;top:90px;width:15px;height:1px;background:#FFFFFF"></div>
<div style="left:1260px;top:90px;width:1px;height:95px;background:#FFFFFF"></div>
<div style="left:1260px;top:185px;width:16px;height:1px;background:#3F4743"></div>
<div style="left:1275px;top:90px;width:1px;height:96px;background:#3F4743"></div>
<div style="left:1261px;top:184px;width:14px;height:1px;background:#858D88"></div>
<div style="left:1274px;top:91px;width:1px;height:94px;background:#858D88"></div>
<div style="left:1260px;top:203px;width:16px;height:16px;background:#D7DCD3"></div>
<div style="left:1260px;top:203px;width:15px;height:1px;background:#FFFFFF"></div>
<div style="left:1260px;top:203px;width:1px;height:15px;background:#FFFFFF"></div>
<div style="left:1260px;top:218px;width:16px;height:1px;background:#3F4743"></div>
<div style="left:1275px;top:203px;width:1px;height:16px;background:#3F4743"></div>
<div style="left:1261px;top:217px;width:14px;height:1px;background:#858D88"></div>
<div style="left:1274px;top:204px;width:1px;height:14px;background:#858D88"></div>
<svg style="left:1264px;top:209px" width="8" height="5"><path d="M0 0.5H7.5L3.75 4.5Z" fill="#000"/></svg>
<div style="left:793px;top:227px;width:206px;height:1px;background:#7E8882"></div>
<div style="left:794px;top:228px;width:206px;height:1px;background:#FFFFFF"></div>
<div style="left:793px;top:227px;width:1px;height:76px;background:#7E8882"></div>
<div style="left:794px;top:228px;width:1px;height:75px;background:#FFFFFF"></div>
<div style="left:793px;top:302px;width:206px;height:1px;background:#7E8882"></div>
<div style="left:793px;top:303px;width:207px;height:1px;background:#FFFFFF"></div>
<div style="left:998px;top:227px;width:1px;height:76px;background:#7E8882"></div>
<div style="left:999px;top:227px;width:1px;height:77px;background:#FFFFFF"></div>
<div style="left:800px;top:220px;width:154px;height:12px;background:#D7DCD3"></div>
<span style="left:800.4px;top:221.9px;font-size:12.0px;font-weight:normal;color:#808A84;transform:scaleX(0.9167);transform-origin:0 0;">Показать проводники идущие</span>
<svg style="left:801px;top:241px" width="12" height="12"><circle cx="6" cy="6" r="5.5" fill="none" stroke="#808A84" stroke-width="1"/><circle cx="6" cy="6" r="2" fill="#6E7872"/></svg>
<span style="left:818.7px;top:239.9px;font-size:12.0px;font-weight:normal;color:#7A8480;transform:scaleX(0.9167);transform-origin:0 0;">Только наружу</span>
<svg style="left:801px;top:257px" width="12" height="12"><circle cx="6" cy="6" r="5.5" fill="none" stroke="#808A84" stroke-width="1"/></svg>
<span style="left:818.7px;top:255.9px;font-size:12.0px;font-weight:normal;color:#7A8480;transform:scaleX(0.9167);transform-origin:0 0;">Наружу и во вложенные оболочки</span>
<svg style="left:801px;top:273px" width="12" height="12"><circle cx="6" cy="6" r="5.5" fill="none" stroke="#808A84" stroke-width="1"/></svg>
<span style="left:818.7px;top:271.9px;font-size:12.0px;font-weight:normal;color:#7A8480;transform:scaleX(0.9167);transform-origin:0 0;">Только во вложенные оболочки</span>
<svg style="left:801px;top:289px" width="12" height="12"><circle cx="6" cy="6" r="5.5" fill="none" stroke="#808A84" stroke-width="1"/></svg>
<span style="left:818.7px;top:287.9px;font-size:12.0px;font-weight:normal;color:#7A8480;transform:scaleX(0.9167);transform-origin:0 0;">Между двумя оболочками</span>
<span style="left:1010px;top:230.5px;font-size:12.0px;font-weight:normal;color:#000;transform:scaleX(0.9167);transform-origin:0 0;">Из оболочки</span>
<span style="left:1010px;top:251.5px;font-size:12.0px;font-weight:normal;color:#8A948E;transform:scaleX(0.9167);transform-origin:0 0;">В оболочку</span>
<div style="left:1079px;top:226px;width:190px;height:20px;background:#FFFFFF"></div>
<div style="left:1079px;top:226px;width:189px;height:1px;background:#858D88"></div>
<div style="left:1079px;top:226px;width:1px;height:19px;background:#858D88"></div>
<div style="left:1080px;top:227px;width:187px;height:1px;background:#5A625E"></div>
<div style="left:1080px;top:227px;width:1px;height:17px;background:#5A625E"></div>
<div style="left:1079px;top:245px;width:190px;height:1px;background:#FFFFFF"></div>
<div style="left:1268px;top:226px;width:1px;height:20px;background:#FFFFFF"></div>
<div style="left:1080px;top:244px;width:188px;height:1px;background:#D7DCD3"></div>
<div style="left:1267px;top:227px;width:1px;height:18px;background:#D7DCD3"></div>
<div style="left:1252px;top:228px;width:15px;height:16px;background:#D7DCD3"></div>
<div style="left:1252px;top:228px;width:14px;height:1px;background:#FFFFFF"></div>
<div style="left:1252px;top:228px;width:1px;height:15px;background:#FFFFFF"></div>
<div style="left:1252px;top:243px;width:15px;height:1px;background:#3F4743"></div>
<div style="left:1266px;top:228px;width:1px;height:16px;background:#3F4743"></div>
<div style="left:1253px;top:242px;width:13px;height:1px;background:#858D88"></div>
<div style="left:1265px;top:229px;width:1px;height:14px;background:#858D88"></div>
<svg style="left:1256px;top:234px" width="8" height="5"><path d="M0 0.5H7.5L3.75 4.5Z" fill="#000"/></svg>
<div style="left:1079px;top:248px;width:190px;height:20px;background:#D7DCD3"></div>
<div style="left:1079px;top:248px;width:189px;height:1px;background:#858D88"></div>
<div style="left:1079px;top:248px;width:1px;height:19px;background:#858D88"></div>
<div style="left:1080px;top:249px;width:187px;height:1px;background:#5A625E"></div>
<div style="left:1080px;top:249px;width:1px;height:17px;background:#5A625E"></div>
<div style="left:1079px;top:267px;width:190px;height:1px;background:#FFFFFF"></div>
<div style="left:1268px;top:248px;width:1px;height:20px;background:#FFFFFF"></div>
<div style="left:1080px;top:266px;width:188px;height:1px;background:#D7DCD3"></div>
<div style="left:1267px;top:249px;width:1px;height:18px;background:#D7DCD3"></div>
<div style="left:1252px;top:250px;width:15px;height:16px;background:#D7DCD3"></div>
<div style="left:1252px;top:250px;width:14px;height:1px;background:#FFFFFF"></div>
<div style="left:1252px;top:250px;width:1px;height:15px;background:#FFFFFF"></div>
<div style="left:1252px;top:265px;width:15px;height:1px;background:#3F4743"></div>
<div style="left:1266px;top:250px;width:1px;height:16px;background:#3F4743"></div>
<div style="left:1253px;top:264px;width:13px;height:1px;background:#858D88"></div>
<div style="left:1265px;top:251px;width:1px;height:14px;background:#858D88"></div>
<svg style="left:1256px;top:256px" width="8" height="5"><path d="M0 0.5H7.5L3.75 4.5Z" fill="#858D88"/></svg>
<span style="left:1010px;top:271.5px;font-size:12.0px;font-weight:normal;color:#000;transform:scaleX(0.9167);transform-origin:0 0;">Сторона из которой провода идут наружу оболочки</span>
<svg style="left:1010px;top:291px" width="12" height="12"><circle cx="6" cy="6" r="5.5" fill="#fff" stroke="#7E8882" stroke-width="1"/><circle cx="6" cy="6" r="2" fill="#000"/></svg>
<span style="left:1028px;top:289.9px;font-size:12.0px;font-weight:normal;color:#000;transform:scaleX(0.9167);transform-origin:0 0;">Слева</span>
<svg style="left:1139px;top:291px" width="12" height="12"><circle cx="6" cy="6" r="5.5" fill="#fff" stroke="#7E8882" stroke-width="1"/></svg>
<span style="left:1157px;top:289.9px;font-size:12.0px;font-weight:normal;color:#000;transform:scaleX(0.9167);transform-origin:0 0;">Справа</span>
<div style="left:4px;top:339px;width:1274px;height:1px;background:#FFFFFF"></div>
<div style="left:4px;top:339px;width:1px;height:112px;background:#FFFFFF"></div>
<div style="left:1277px;top:339px;width:1px;height:111px;background:#858D88"></div>
<div style="left:1278px;top:338px;width:1px;height:113px;background:#3F4743"></div>
<div style="left:5px;top:449px;width:1273px;height:1px;background:#858D88"></div>
<div style="left:4px;top:450px;width:1275px;height:1px;background:#3F4743"></div>
<div style="left:149px;top:321px;width:89px;height:18px;background:#D7DCD3"></div>
<div style="left:151px;top:321px;width:85px;height:1px;background:#FFFFFF"></div>
<div style="left:149px;top:323px;width:1px;height:16px;background:#FFFFFF"></div>
<div style="left:150px;top:322px;width:1px;height:1px;background:#FFFFFF"></div>
<div style="left:236px;top:322px;width:1px;height:16px;background:#858D88"></div>
<div style="left:237px;top:323px;width:1px;height:15px;background:#3F4743"></div>
<span style="left:153.8px;top:324.3px;font-size:12.0px;font-weight:normal;color:#000;transform:scaleX(0.9167);transform-origin:0 0;">Мультиклеммы</span>
<div style="left:4px;top:318px;width:146px;height:22px;background:#D7DCD3"></div>
<div style="left:6px;top:318px;width:142px;height:1px;background:#FFFFFF"></div>
<div style="left:4px;top:320px;width:1px;height:20px;background:#FFFFFF"></div>
<div style="left:5px;top:319px;width:1px;height:1px;background:#FFFFFF"></div>
<div style="left:148px;top:319px;width:1px;height:20px;background:#858D88"></div>
<div style="left:149px;top:320px;width:1px;height:19px;background:#3F4743"></div>
<span style="left:12.2px;top:321.8px;font-size:12.0px;font-weight:normal;color:#000;transform:scaleX(0.9167);transform-origin:0 0;">Состав клеммного блока</span>
<div style="left:5px;top:339px;width:144px;height:1px;background:#D7DCD3"></div>
<div style="left:8px;top:343px;width:544px;height:104px;background:#fff"></div>
<div style="left:8px;top:343px;width:544px;height:1px;background:#8E9893"></div>
<div style="left:8px;top:343px;width:1px;height:104px;background:#8E9893"></div>
<div style="left:551px;top:343px;width:1px;height:104px;background:#8E9893"></div>
<div style="left:9px;top:344px;width:542px;height:17px;background:#D7DCD3"></div>
<div style="left:9px;top:344px;width:542px;height:1px;background:#FFFFFF"></div>
<div style="left:9px;top:344px;width:1px;height:17px;background:#FFFFFF"></div>
<div style="left:9px;top:361px;width:543px;height:1px;background:#8E9893"></div>
<div style="left:315px;top:344px;width:1px;height:17px;background:#8E9893"></div>
<div style="left:316px;top:345px;width:1px;height:16px;background:#FFFFFF"></div>
<div style="left:315px;top:361px;width:1px;height:55px;background:#8E9893"></div>
<div style="left:408px;top:344px;width:1px;height:17px;background:#8E9893"></div>
<div style="left:409px;top:345px;width:1px;height:16px;background:#FFFFFF"></div>
<div style="left:408px;top:361px;width:1px;height:55px;background:#8E9893"></div>
<div style="left:491px;top:344px;width:1px;height:17px;background:#8E9893"></div>
<div style="left:492px;top:345px;width:1px;height:16px;background:#FFFFFF"></div>
<div style="left:491px;top:361px;width:1px;height:55px;background:#8E9893"></div>
<div style="left:551px;top:344px;width:1px;height:17px;background:#8E9893"></div>
<div style="left:551px;top:361px;width:1px;height:55px;background:#8E9893"></div>
<span style="left:12.5px;top:345.96px;font-size:12.8px;font-weight:bold;color:#000;transform:scaleX(0.9219);transform-origin:0 0;">Сопутствующее изделие</span>
<span style="left:319.5px;top:345.96px;font-size:12.8px;font-weight:bold;color:#000;transform:scaleX(0.9219);transform-origin:0 0;">Количество</span>
<span style="left:412.5px;top:345.96px;font-size:12.8px;font-weight:bold;color:#000;transform:scaleX(0.9219);transform-origin:0 0;">Единица изм</span>
<span style="left:495.5px;top:345.96px;font-size:12.8px;font-weight:bold;color:#000;transform:scaleX(0.9219);transform-origin:0 0;">В отчет</span>
<div style="left:9px;top:362px;width:306px;height:17px;background:#D7DCD3"></div>
<div style="left:316px;top:362px;width:92px;height:17px;background:#D7DCD3"></div>
<div style="left:492px;top:362px;width:59px;height:17px;background:#D7DCD3"></div>
<div style="left:9px;top:379px;width:543px;height:1px;background:#8E9893"></div>
<span style="left:11px;top:364.3px;font-size:12.0px;font-weight:normal;color:#000;transform:scaleX(0.9167);transform-origin:0 0;">Проходная клемма UTTB 2,5 серый, двухярусная</span>
<span style="left:318px;top:364.3px;font-size:12.0px;font-weight:normal;color:#000;transform:scaleX(0.9167);transform-origin:0 0;">1</span>
<span style="left:411px;top:364.3px;font-size:12.0px;font-weight:normal;color:#000;transform:scaleX(0.9167);transform-origin:0 0;">Штука</span>
<svg style="left:515px;top:364px" width="13" height="13"><rect x="0.5" y="0.5" width="12" height="12" fill="#fff" stroke="#8A948E"/><rect x="1.5" y="1.5" width="10" height="10" fill="none" stroke="#E4E8E2"/><path d="M3 6.2L5.2 8.6L10 3.6" stroke="#000" stroke-width="1.8" fill="none"/></svg>
<div style="left:9px;top:397px;width:543px;height:1px;background:#8E9893"></div>
<span style="left:11px;top:382.3px;font-size:12.0px;font-weight:normal;color:#000;transform:scaleX(0.9167);transform-origin:0 0;">Проходная клемма UT2,5 серый</span>
<span style="left:318px;top:382.3px;font-size:12.0px;font-weight:normal;color:#000;transform:scaleX(0.9167);transform-origin:0 0;">2</span>
<span style="left:411px;top:382.3px;font-size:12.0px;font-weight:normal;color:#000;transform:scaleX(0.9167);transform-origin:0 0;">Штука</span>
<svg style="left:515px;top:382px" width="13" height="13"><rect x="0.5" y="0.5" width="12" height="12" fill="#fff" stroke="#8A948E"/><rect x="1.5" y="1.5" width="10" height="10" fill="none" stroke="#E4E8E2"/><path d="M3 6.2L5.2 8.6L10 3.6" stroke="#000" stroke-width="1.8" fill="none"/></svg>
<div style="left:9px;top:415px;width:543px;height:1px;background:#8E9893"></div>
<span style="left:11px;top:400.3px;font-size:12.0px;font-weight:normal;color:#000;transform:scaleX(0.9167);transform-origin:0 0;">Проходная клемма для больших токов UKH 95 серый</span>
<span style="left:318px;top:400.3px;font-size:12.0px;font-weight:normal;color:#000;transform:scaleX(0.9167);transform-origin:0 0;">1</span>
<span style="left:411px;top:400.3px;font-size:12.0px;font-weight:normal;color:#000;transform:scaleX(0.9167);transform-origin:0 0;">Штука</span>
<svg style="left:515px;top:400px" width="13" height="13"><rect x="0.5" y="0.5" width="12" height="12" fill="#fff" stroke="#8A948E"/><rect x="1.5" y="1.5" width="10" height="10" fill="none" stroke="#E4E8E2"/><path d="M3 6.2L5.2 8.6L10 3.6" stroke="#000" stroke-width="1.8" fill="none"/></svg>
<div style="left:561px;top:343px;width:715px;height:105px;background:#fff"></div>
<div style="left:561px;top:343px;width:715px;height:1px;background:#8E9893"></div>
<div style="left:561px;top:343px;width:1px;height:105px;background:#8E9893"></div>
<div style="left:562px;top:344px;width:711px;height:17px;background:#D7DCD3"></div>
<div style="left:562px;top:344px;width:711px;height:1px;background:#FFFFFF"></div>
<div style="left:562px;top:344px;width:1px;height:17px;background:#FFFFFF"></div>
<div style="left:562px;top:361px;width:712px;height:1px;background:#8E9893"></div>
<div style="left:690px;top:344px;width:1px;height:17px;background:#8E9893"></div>
<div style="left:691px;top:345px;width:1px;height:16px;background:#FFFFFF"></div>
<div style="left:690px;top:361px;width:1px;height:73px;background:#8E9893"></div>
<div style="left:766px;top:344px;width:1px;height:17px;background:#8E9893"></div>
<div style="left:767px;top:345px;width:1px;height:16px;background:#FFFFFF"></div>
<div style="left:766px;top:361px;width:1px;height:73px;background:#8E9893"></div>
<div style="left:945px;top:344px;width:1px;height:17px;background:#8E9893"></div>
<div style="left:946px;top:345px;width:1px;height:16px;background:#FFFFFF"></div>
<div style="left:945px;top:361px;width:1px;height:73px;background:#8E9893"></div>
<div style="left:1063px;top:344px;width:1px;height:17px;background:#8E9893"></div>
<div style="left:1064px;top:345px;width:1px;height:16px;background:#FFFFFF"></div>
<div style="left:1063px;top:361px;width:1px;height:73px;background:#8E9893"></div>
<div style="left:1273px;top:344px;width:1px;height:17px;background:#8E9893"></div>
<div style="left:1273px;top:361px;width:1px;height:73px;background:#8E9893"></div>
<div style="left:1274px;top:343px;width:1px;height:105px;background:#FFFFFF"></div>
<span style="left:565.5px;top:345.96px;font-size:12.8px;font-weight:bold;color:#000;transform:scaleX(0.9219);transform-origin:0 0;">Перемычка</span>
<span style="left:694.5px;top:345.96px;font-size:12.8px;font-weight:bold;color:#000;transform:scaleX(0.9219);transform-origin:0 0;">ЭС</span>
<span style="left:770.5px;top:345.96px;font-size:12.8px;font-weight:bold;color:#000;transform:scaleX(0.9219);transform-origin:0 0;">Тип</span>
<span style="left:949.5px;top:345.96px;font-size:12.8px;font-weight:bold;color:#000;transform:scaleX(0.9219);transform-origin:0 0;">Контакт</span>
<span style="left:1067.5px;top:345.96px;font-size:12.8px;font-weight:bold;color:#000;transform:scaleX(0.9219);transform-origin:0 0;">Группа контакта</span>
<div style="left:562px;top:397px;width:383px;height:1px;background:#8E9893"></div>
<div style="left:562px;top:433px;width:383px;height:1px;background:#8E9893"></div>
<div style="left:945px;top:379px;width:329px;height:1px;background:#8E9893"></div>
<div style="left:945px;top:397px;width:329px;height:1px;background:#8E9893"></div>
<div style="left:945px;top:415px;width:329px;height:1px;background:#8E9893"></div>
<div style="left:945px;top:433px;width:329px;height:1px;background:#8E9893"></div>
<span style="left:564px;top:364.3px;font-size:12.0px;font-weight:normal;color:#000;transform:scaleX(0.9167);transform-origin:0 0;">Пер-1</span>
<span style="left:693px;top:364.3px;font-size:12.0px;font-weight:normal;color:#000;transform:scaleX(0.9167);transform-origin:0 0;">4</span>
<span style="left:564px;top:400.3px;font-size:12.0px;font-weight:normal;color:#000;transform:scaleX(0.9167);transform-origin:0 0;">Пер-3</span>
<span style="left:693px;top:400.3px;font-size:12.0px;font-weight:normal;color:#000;transform:scaleX(0.9167);transform-origin:0 0;">4</span>
<span style="left:948px;top:364.3px;font-size:12.0px;font-weight:normal;color:#000;transform:scaleX(0.9167);transform-origin:0 0;">20</span>
<span style="left:948px;top:382.3px;font-size:12.0px;font-weight:normal;color:#000;transform:scaleX(0.9167);transform-origin:0 0;">30</span>
<span style="left:948px;top:400.3px;font-size:12.0px;font-weight:normal;color:#000;transform:scaleX(0.9167);transform-origin:0 0;">4</span>
<span style="left:948px;top:418.3px;font-size:12.0px;font-weight:normal;color:#000;transform:scaleX(0.9167);transform-origin:0 0;">30</span>
<div style="left:4px;top:453px;width:199px;height:1px;background:#858D88"></div>
<div style="left:4px;top:453px;width:1px;height:17px;background:#858D88"></div>
<div style="left:4px;top:469px;width:200px;height:1px;background:#FFFFFF"></div>
<div style="left:203px;top:453px;width:1px;height:17px;background:#FFFFFF"></div>
<span style="left:5px;top:455.8px;font-size:12.0px;font-weight:normal;color:#000;transform:scaleX(0.9167);transform-origin:0 0;">Обозначение: XT1</span>
<div style="left:206px;top:453px;width:596px;height:1px;background:#858D88"></div>
<div style="left:206px;top:453px;width:1px;height:17px;background:#858D88"></div>
<div style="left:206px;top:469px;width:597px;height:1px;background:#FFFFFF"></div>
<div style="left:802px;top:453px;width:1px;height:17px;background:#FFFFFF"></div>
<span style="left:207px;top:455.8px;font-size:12.0px;font-weight:normal;color:#000;transform:scaleX(0.9167);transform-origin:0 0;">Строка заказа:</span>
<div style="left:804px;top:453px;width:475px;height:1px;background:#858D88"></div>
<div style="left:804px;top:453px;width:1px;height:17px;background:#858D88"></div>
<div style="left:804px;top:469px;width:476px;height:1px;background:#FFFFFF"></div>
<div style="left:1279px;top:453px;width:1px;height:17px;background:#FFFFFF"></div>
<span style="left:805px;top:455.8px;font-size:12.0px;font-weight:normal;color:#000;transform:scaleX(0.9167);transform-origin:0 0;">Оболочка: 1</span>
<div style="left:1104px;top:478px;width:75px;height:25px;background:#D7DCD3"></div>
<div style="left:1104px;top:478px;width:75px;height:1px;background:#FFFFFF"></div>
<div style="left:1104px;top:478px;width:1px;height:25px;background:#FFFFFF"></div>
<div style="left:1104px;top:502px;width:75px;height:1px;background:#858D88"></div>
<div style="left:1178px;top:478px;width:1px;height:25px;background:#858D88"></div>
<span style="left:1133.3px;top:484.4px;font-size:12.0px;font-weight:normal;color:#000;transform:scaleX(0.9167);transform-origin:0 0;">OK</span>
<div style="left:1192px;top:478px;width:75px;height:25px;background:#D7DCD3"></div>
<div style="left:1192px;top:478px;width:75px;height:1px;background:#FFFFFF"></div>
<div style="left:1192px;top:478px;width:1px;height:25px;background:#FFFFFF"></div>
<div style="left:1192px;top:502px;width:75px;height:1px;background:#858D88"></div>
<div style="left:1266px;top:478px;width:1px;height:25px;background:#858D88"></div>
<span style="left:1209.5px;top:484.4px;font-size:12.0px;font-weight:normal;color:#000;transform:scaleX(0.9167);transform-origin:0 0;">Отмена</span>
</body></html>
